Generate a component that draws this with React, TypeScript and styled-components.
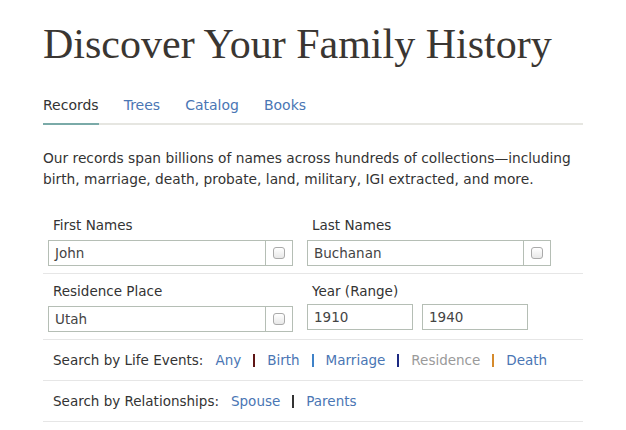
import styled, { createGlobalStyle } from 'styled-components';

const Global = createGlobalStyle`
  body {
    margin: 0;
    background: #fff;
    font-family: "DejaVu Sans", Verdana, sans-serif;
    color: #333;
  }
`;

const Page = styled.div`
  width: 540px;
  padding: 20px 0 0 43px;
`;

const Title = styled.h1`
  margin: 0;
  font-family: "Liberation Serif", "Times New Roman", serif;
  font-weight: normal;
  font-size: 42px;
  line-height: 48px;
  color: #3a3632;
`;

const Tabs = styled.div`
  display: flex;
  gap: 25px;
  margin-top: 27px;
  border-bottom: 2px solid #e6e6e1;
`;

const Tab = styled.a<{ $active?: boolean }>`
  font-size: 14px;
  line-height: 20px;
  padding-bottom: 8px;
  margin-bottom: -2px;
  color: ${p => (p.$active ? '#333' : '#4a76b4')};
  border-bottom: 2px solid ${p => (p.$active ? '#7aaaa8' : 'transparent')};
  text-decoration: none;
  cursor: pointer;
`;

const Intro = styled.p`
  margin: 23px 0 0;
  font-size: 13.75px;
  line-height: 21px;
  color: #333;
`;

const Form = styled.div`
  margin-top: 18px;
`;

const Row = styled.div`
  display: grid;
  grid-template-columns: 259px 1fr;
  padding: 9px 0 7px 5px;
  border-bottom: 1px solid #e6e6e6;
`;

const Field = styled.div`
  display: flex;
  flex-direction: column;
  gap: 7px;
`;

const Label = styled.label`
  font-size: 13.5px;
  line-height: 16px;
  padding-left: 5px;
  color: #333;
`;

const InputBox = styled.div<{ $width: number }>`
  display: flex;
  width: ${p => p.$width}px;
  height: 26px;
  box-sizing: border-box;
  border: 1px solid #b5beb5;
`;

const TextValue = styled.div`
  flex: 1;
  padding-left: 6px;
  font-size: 13.5px;
  line-height: 24px;
  color: #444;
`;

const CheckCell = styled.div`
  width: 26px;
  border-left: 1px solid #b5beb5;
  display: flex;
  align-items: center;
  justify-content: center;
`;

const Check = styled.span`
  width: 10px;
  height: 10px;
  border: 1px solid #aaa;
  border-radius: 3px;
  background: linear-gradient(#fff, #e8e8e8);
`;

const Range = styled.div`
  display: flex;
  gap: 9px;
  margin-top: -2px;
  margin-bottom: 2px;
`;

const LinkRow = styled.div`
  display: flex;
  align-items: center;
  height: 40px;
  padding-left: 10px;
  border-bottom: 1px solid #e6e6e6;
  font-size: 13.5px;
  color: #333;
`;

const RowLabel = styled.span`
  margin-right: 12px;
`;

const Link = styled.a<{ $muted?: boolean }>`
  color: ${p => (p.$muted ? '#9a9a9a' : '#4a76b4')};
  text-decoration: none;
  cursor: pointer;
`;

const Sep = styled.span<{ $color: string }>`
  display: inline-block;
  width: 2px;
  height: 13px;
  margin: 0 12px;
  background: ${p => p.$color};
`;

const TextInput = ({ value, width, check }: { value: string; width: number; check?: boolean }) => (
  <InputBox $width={width}>
    <TextValue>{value}</TextValue>
    {check && (
      <CheckCell>
        <Check />
      </CheckCell>
    )}
  </InputBox>
);

export default function App() {
  return (
    <Page>
      <Global />
      <Title>Discover Your Family History</Title>
      <Tabs>
        <Tab $active>Records</Tab>
        <Tab>Trees</Tab>
        <Tab>Catalog</Tab>
        <Tab>Books</Tab>
      </Tabs>
      <Intro>
        Our records span billions of names across hundreds of collections—including birth, marriage,
        death, probate, land, military, IGI extracted, and more.
      </Intro>
      <Form>
        <Row>
          <Field>
            <Label>First Names</Label>
            <TextInput value="John" width={245} check />
          </Field>
          <Field>
            <Label>Last Names</Label>
            <TextInput value="Buchanan" width={244} check />
          </Field>
        </Row>
        <Row>
          <Field>
            <Label>Residence Place</Label>
            <TextInput value="Utah" width={245} check />
          </Field>
          <Field>
            <Label>Year (Range)</Label>
            <Range>
              <TextInput value="1910" width={106} />
              <TextInput value="1940" width={106} />
            </Range>
          </Field>
        </Row>
        <LinkRow>
          <RowLabel>Search by Life Events:</RowLabel>
          <Link>Any</Link>
          <Sep $color="#5e1515" />
          <Link>Birth</Link>
          <Sep $color="#3f82c8" />
          <Link>Marriage</Link>
          <Sep $color="#1c2a82" />
          <Link $muted>Residence</Link>
          <Sep $color="#d58a2c" />
          <Link>Death</Link>
        </LinkRow>
        <LinkRow>
          <RowLabel>Search by Relationships:</RowLabel>
          <Link>Spouse</Link>
          <Sep $color="#333" />
          <Link>Parents</Link>
        </LinkRow>
      </Form>
    </Page>
  );
}
